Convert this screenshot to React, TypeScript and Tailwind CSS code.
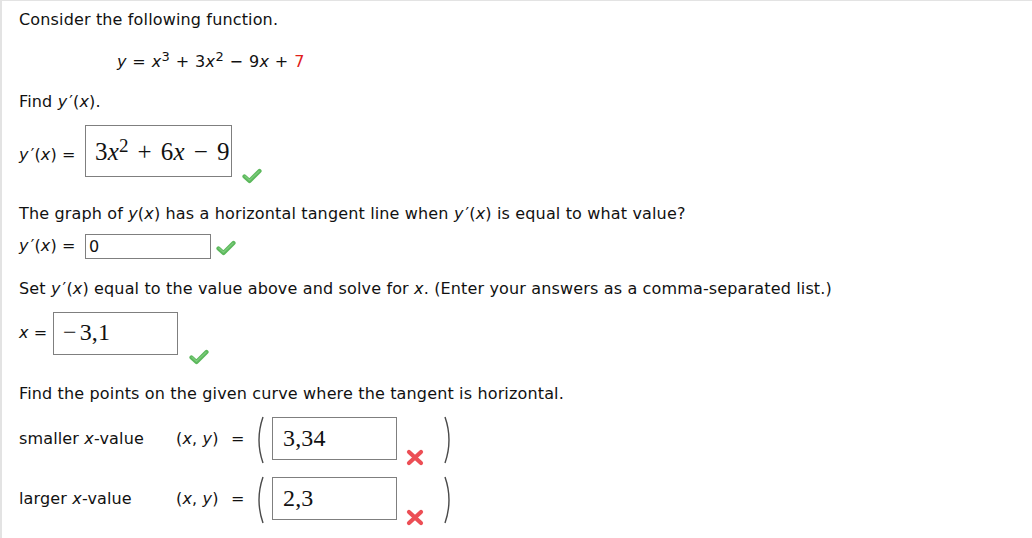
import React from "react";

const sans = { fontFamily: '"DejaVu Sans", Verdana, sans-serif' };
const serif = { fontFamily: '"Liberation Serif", "Times New Roman", serif' };

function Check({ className = "" }: { className?: string }) {
  return (
    <svg width="20" height="16" viewBox="0 0 20 16" className={className}>
      <path d="M2.5 8.5 L7.5 13 L17.5 3" fill="none" stroke="#5cb85c" strokeWidth="4.2" strokeLinecap="round" strokeLinejoin="round" />
      <path d="M3 8.2 L7.5 12.2 L17 3.2" fill="none" stroke="#7acb7a" strokeWidth="1.4" strokeLinecap="round" strokeLinejoin="round" />
    </svg>
  );
}

function Cross({ className = "" }: { className?: string }) {
  return (
    <svg width="18" height="17" viewBox="0 0 18 17" className={className}>
      <path d="M3 3 L15 14 M15 3 L3 14" fill="none" stroke="#ec4e55" strokeWidth="4.2" strokeLinecap="round" />
    </svg>
  );
}

function Paren({ right = false }: { right?: boolean }) {
  return (
    <svg width="11" height="48" viewBox="0 0 11 48">
      <path d={right ? "M2 1 Q10 24 2 47" : "M9 1 Q1 24 9 47"} fill="none" stroke="#4a4a4a" strokeWidth="1.4" />
    </svg>
  );
}

const I = ({ children }: { children: React.ReactNode }) => <span className="italic">{children}</span>;

function YPrime() {
  return (
    <span>
      <I>y</I>
      <span className="ml-[2px]">′</span>(<I>x</I>)
    </span>
  );
}

function PointRow({ label, value, className = "" }: { label: string; value: string; className?: string }) {
  return (
    <div className={`flex items-start ${className}`}>
      <div className="w-[157px] pt-[14px]">
        {label} <I>x</I>-value
      </div>
      <div className="w-[55px] pt-[14px]">
        (<I>x</I>, <I>y</I>)
      </div>
      <div className="w-[20px] pt-[14px]">=</div>
      <div className="ml-[3px] flex items-start">
        <Paren />
        <div
          className="ml-[7px] mt-[1px] h-[43px] w-[125px] border border-[#7f7f7f] pl-[10px] pt-[7px] text-[24px] leading-[26px] text-[#111]"
          style={serif}
        >
          {value}
        </div>
        <Cross className="ml-[9px] mt-[33px]" />
        <div className="ml-[19px]">
          <Paren right />
        </div>
      </div>
    </div>
  );
}

export default function App() {
  return (
    <div
      className="h-[538px] w-[1032px] overflow-hidden border-l-2 border-t border-[#e3e3e3] bg-white pl-[17px] pt-[10px] text-[16px] leading-[18px] tracking-[0.15px] text-[#111]"
      style={sans}
    >
      <p>Consider the following function.</p>

      <p className="ml-[98px] mt-[24px] tracking-[0.4px]">
        <I>y</I> = <I>x</I>
        <sup className="text-[13px]">3</sup> + 3<I>x</I>
        <sup className="text-[13px]">2</sup> − 9<I>x</I> + <span className="text-[#e0201b]">7</span>
      </p>

      <p className="mt-[22px]">
        Find <YPrime />.
      </p>

      <div className="mt-[14px] flex items-start">
        <div className="w-[66px] pt-[21px]">
          <YPrime /> =
        </div>
        <div
          className="flex h-[52px] w-[147px] items-center border border-[#7f7f7f] pl-[9px] pt-[2px] text-[25px] text-[#111]"
          style={serif}
        >
          3<I>x</I>
          <sup className="relative -top-[6px] text-[19px]">2</sup>
          <span className="ml-[9px]">+</span>
          <span className="ml-[9px]">6</span>
          <I>x</I>
          <span className="ml-[9px]">−</span>
          <span className="ml-[9px]">9</span>
        </div>
        <Check className="ml-[10px] mt-[43px]" />
      </div>

      <p className="mt-[21px]">
        The graph of <I>y</I>(<I>x</I>) has a horizontal tangent line when <YPrime /> is equal to what value?
      </p>

      <div className="mt-[11px] flex items-start">
        <div className="w-[66px] pt-[3px]">
          <YPrime /> =
        </div>
        <div className="h-[25px] w-[126px] border border-[#7f7f7f] pl-[3px] pt-[2px] text-[16px] leading-[19px]">0</div>
        <Check className="ml-[5px] mt-[6px]" />
      </div>

      <p className="mt-[21px]">
        Set <YPrime /> equal to the value above and solve for <I>x</I>. (Enter your answers as a comma-separated list.)
      </p>

      <div className="mt-[14px] flex items-start">
        <div className="w-[34px] pt-[12px]">
          <I>x</I> =
        </div>
        <div
          className="flex h-[43px] w-[125px] border border-[#7f7f7f] pl-[9px] pt-[6px] text-[24px] leading-[26px] text-[#111]"
          style={serif}
        >
          <span className="mr-[3px]">−</span>3,1
        </div>
        <Check className="ml-[11px] mt-[37px]" />
      </div>

      <p className="mt-[20px]">Find the points on the given curve where the tangent is horizontal.</p>

      <PointRow className="mt-[13px]" label="smaller" value="3,34" />
      <PointRow className="mt-[10px]" label="larger" value="2,3" />
    </div>
  );
}
